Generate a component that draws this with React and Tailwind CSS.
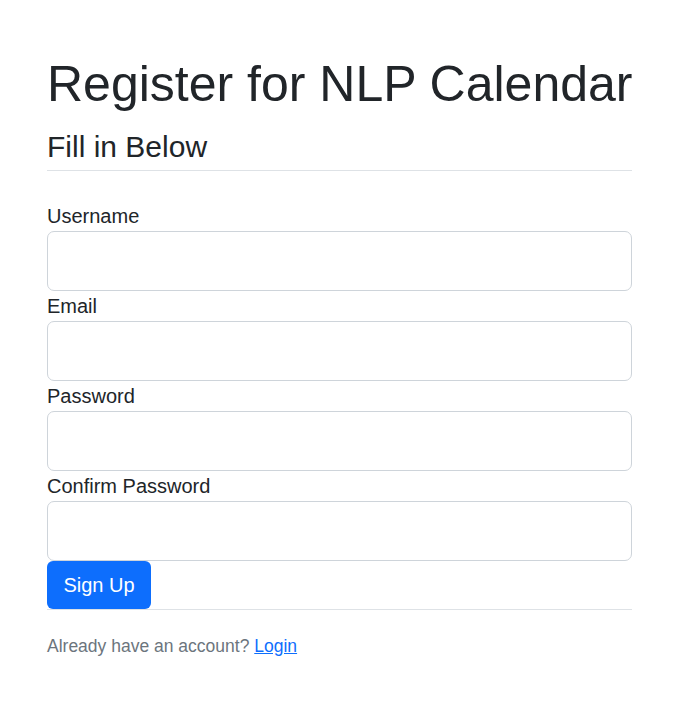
export default function App() {
  const fields = ["Username", "Email", "Password", "Confirm Password"];
  return (
    <div className="min-h-screen bg-white font-['Liberation_Sans',Arial,sans-serif] text-[#212529]">
      <div className="ml-[47px] w-[585px] pt-[54px]">
        <h1 className="text-[50px] leading-[60px] font-normal whitespace-nowrap">Register for NLP Calendar</h1>
        <h2 className="mt-[15px] text-[30px] leading-[36px] font-normal">Fill in Below</h2>
        <hr className="mt-[5px] border-0 border-t border-[#dee2e6]" />
        <form className="mt-[30px] flex flex-col" onSubmit={(e) => e.preventDefault()}>
          {fields.map((f) => (
            <div key={f} className="flex flex-col">
              <label className="text-[20px] leading-[30px]">{f}</label>
              <input
                type={f.includes("Password") ? "password" : "text"}
                className="h-[60px] w-full rounded-[7px] border border-[#ced4da] bg-white px-4 text-[20px] outline-none"
              />
            </div>
          ))}
          <button
            type="submit"
            className="h-[48px] w-[104px] rounded-[6px] bg-[#0d6efd] text-[20px] leading-[30px] text-white"
          >
            Sign Up
          </button>
        </form>
        <hr className="border-0 border-t border-[#dee2e6]" />
        <p className="mt-[23px] text-[17.5px] leading-[26px] text-[#6c757d]">
          Already have an account?{" "}
          <a href="#" className="text-[#0d6efd] underline">
            Login
          </a>
        </p>
      </div>
    </div>
  );
}
